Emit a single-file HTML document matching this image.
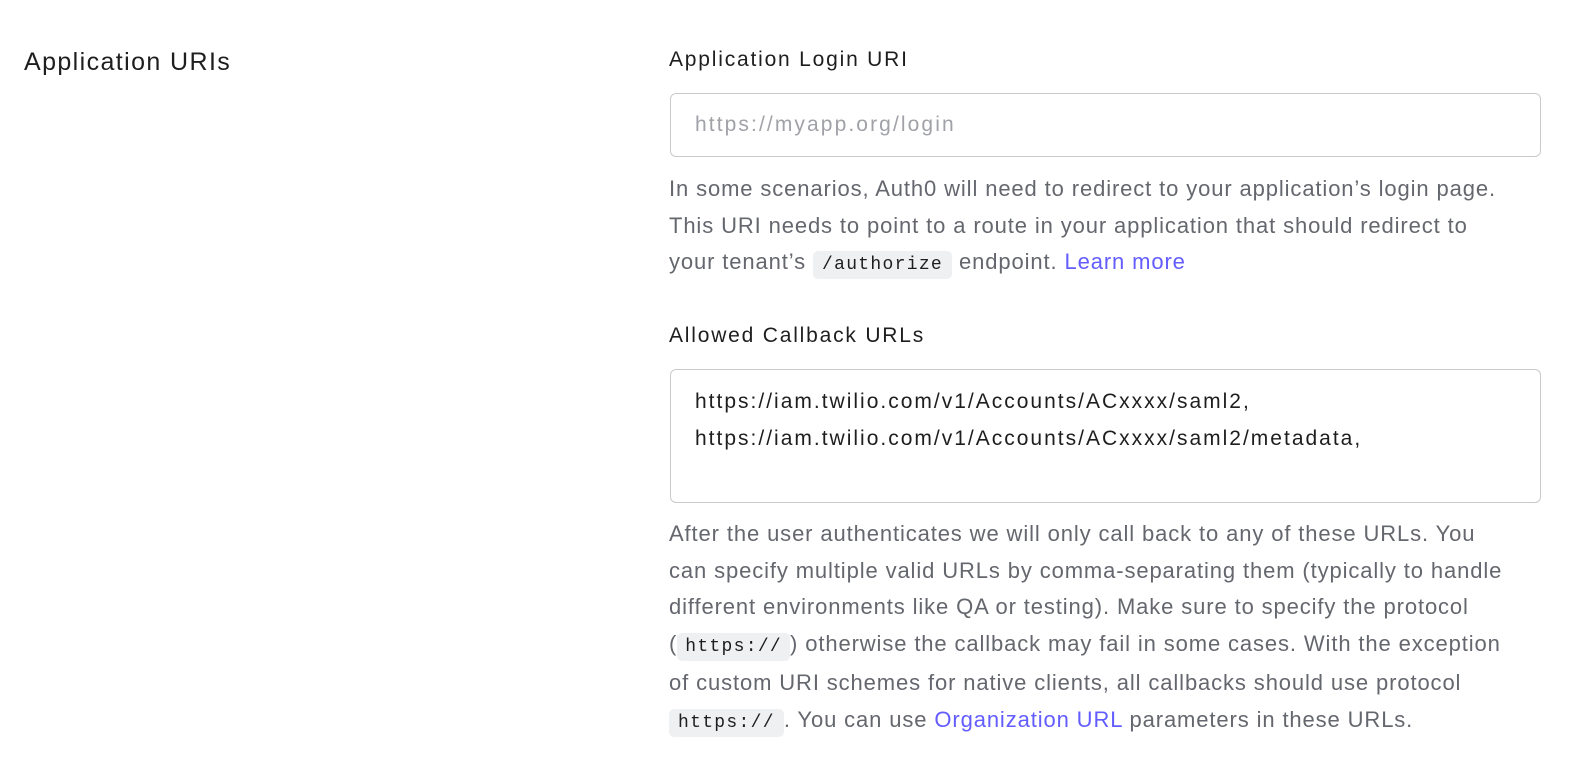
<!DOCTYPE html>
<html><head><meta charset="utf-8"><style>
body{margin:0;width:1572px;height:762px;background:#fff;font-family:"Liberation Sans",Arial,sans-serif;position:relative;overflow:hidden}
.a{position:absolute;white-space:nowrap}
h2{position:absolute;left:24px;top:48px;margin:0;font-size:25px;font-weight:400;color:#1e1e1e;letter-spacing:1.4px}
.lbl{font-size:21px;color:#1e1e1e;font-weight:500;letter-spacing:1.8px}
.box{position:absolute;left:670px;width:871px;border:1px solid #c9cace;border-radius:6px;box-sizing:border-box}
.help{font-size:22px;color:#65676e;line-height:36.5px;letter-spacing:.88px}
code{font-family:"Liberation Mono",monospace;font-size:18px;color:#1e1e1e;background:#eff0f2;border-radius:5px;padding:4px 9px;letter-spacing:1.3px}
.lk{color:#635dff}
</style></head><body>
<h2>Application URIs</h2>
<div class="a lbl" style="left:669px;top:48px">Application Login URI</div>
<div class="box" style="top:93px;height:64px"></div>
<div class="a" style="left:695px;top:113px;font-size:21px;color:#a0a2a8;letter-spacing:2.1px">https://myapp.org/login</div>
<div class="a help" style="left:669px;top:171px">In some scenarios, Auth0 will need to redirect to your application’s login page.<br>This URI needs to point to a route in your application that should redirect to<br>your tenant’s <code>/authorize</code> endpoint. <span class="lk">Learn more</span></div>
<div class="a lbl" style="left:669px;top:324px">Allowed Callback URLs</div>
<div class="box" style="top:369px;height:134px"></div>
<div class="a" style="left:695px;top:383px;font-size:21px;color:#1e1e1e;line-height:37px;letter-spacing:2px">https://iam.twilio.com/v1/Accounts/ACxxxx/saml2,<br>https://iam.twilio.com/v1/Accounts/ACxxxx/saml2/metadata,</div>
<div class="a help" style="left:669px;top:516px">After the user authenticates we will only call back to any of these URLs. You<br>can specify multiple valid URLs by comma-separating them (typically to handle<br>different environments like QA or testing). Make sure to specify the protocol<br>(<code style="padding:4px 8px">https://</code>) otherwise the callback may fail in some cases. With the exception<br>of custom URI schemes for native clients, all callbacks should use protocol<br><code>https://</code>. You can use <span class="lk">Organization URL</span> parameters in these URLs.</div>
</body></html>
